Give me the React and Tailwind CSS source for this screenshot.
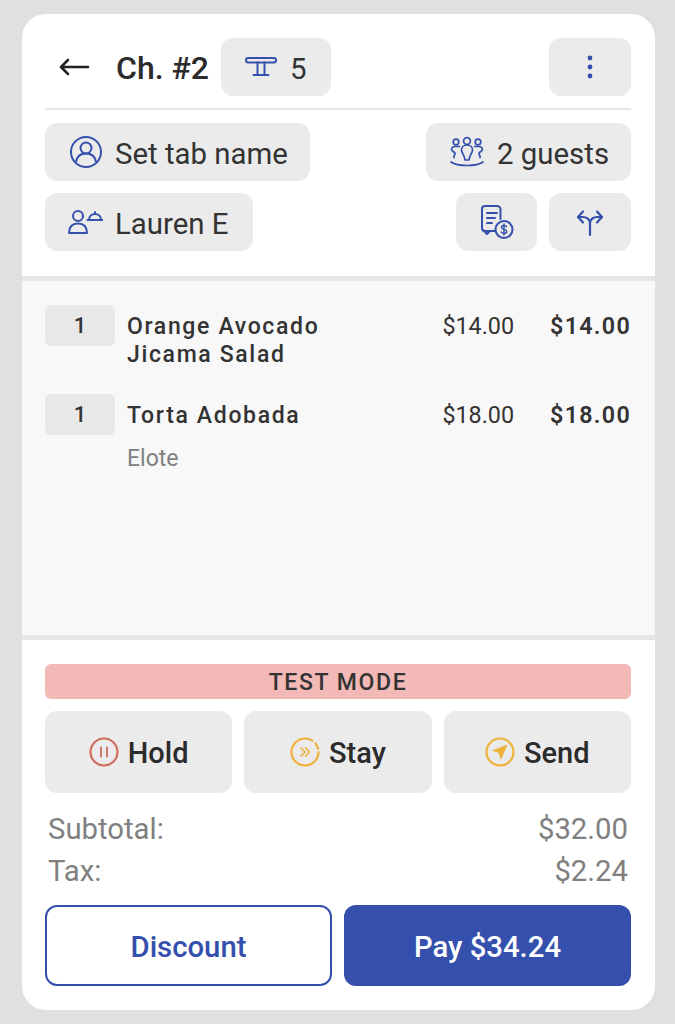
const BLUE = "#3450ac";

const BackArrow = () => (
  <svg width="32" height="22" viewBox="0 0 32 22" fill="none" stroke="#222222" strokeWidth="2.600" strokeLinecap="round" strokeLinejoin="round">
    <path d="M30 11H3M10 4l-7 7 7 7" />
  </svg>
);

const TableIcon = () => (
  <svg width="34" height="24" viewBox="0 0 34 24" fill="none" stroke={BLUE} strokeWidth="2" strokeLinecap="round">
    <rect x="2" y="3" width="30" height="4.500" rx="2.200" />
    <path d="M13.500 7.500V19M20.500 7.500V19M9.500 20h15" />
  </svg>
);

const PersonCircleIcon = () => (
  <svg width="34" height="34" viewBox="0 0 34 34" fill="none" stroke={BLUE} strokeWidth="2">
    <circle cx="17" cy="17" r="15" />
    <circle cx="17" cy="13" r="5.500" />
    <path d="M7 27c1-6 5-8.500 10-8.500S26 21 27 27" />
  </svg>
);

const ServerIcon = () => (
  <svg width="36" height="26" viewBox="0 0 36 26" fill="none" stroke={BLUE} strokeWidth="2" strokeLinecap="round" strokeLinejoin="round">
    <circle cx="11" cy="7" r="5" />
    <path d="M2 24c0-6 3-9.500 9-9.500s9 3.500 9 9.500zM22 11c0-3.500 2.500-6 6-6s6 2.500 6 6zM20.500 11h15M28 5V3" />
  </svg>
);

const GuestsIcon = () => (
  <svg width="34" height="32" viewBox="0 0 34 32" fill="none" stroke={BLUE} strokeWidth="1.700" strokeLinecap="round" strokeLinejoin="round">
    <circle cx="17" cy="5" r="3.400" />
    <circle cx="6" cy="6" r="2.800" />
    <circle cx="28" cy="6" r="2.800" />
    <path d="M11.500 14c0-3 2.500-5 5.500-5s5.500 2 5.500 5c0 3-3 5-3.500 10h-4c-.5-5-3.500-7-3.500-10z" />
    <path d="M9.500 10.500H5c-2 0-3.500 1.500-3.500 3s2.500 2.500 3.500 3.500-2 2.500-1 4.500M24.500 10.500H29c2 0 3.500 1.500 3.500 3s-2.500 2.500-3.500 3.500 2 2.500 1 4.500" />
    <path d="M1 26c4 3 9 3.500 16 3.500S29 29 33 26" />
  </svg>
);

const CheckDollarIcon = () => (
  <svg width="34" height="36" viewBox="0 0 34 36" fill="none" stroke={BLUE} strokeWidth="2" strokeLinecap="round" strokeLinejoin="round">
    <path d="M15 27H5c-1.500 0-3-1-3-3V5c0-2 1.500-3 3-3h12c2 0 3.500 1.500 3.500 3v10" />
    <path d="M7 9h10M7 14h8M7 19h5" />
    <path d="M3 26l4 4 3-3" />
    <circle cx="24" cy="25.500" r="8.500" />
    <path d="M26.500 22.700c-.5-.9-1.500-1.200-2.500-1.200-1.300 0-2.500.7-2.500 1.900 0 2.600 5.200 1.400 5.200 4 0 1.200-1.200 2-2.700 2-1.100 0-2.100-.4-2.700-1.300M24 20v11" strokeWidth="1.400" />
  </svg>
);

const SplitIcon = () => (
  <svg width="30" height="32" viewBox="0 0 30 32" fill="none" stroke={BLUE} strokeWidth="2.200" strokeLinecap="round" strokeLinejoin="round">
    <path d="M15 29V17c0-4-4-6-7-6H3M15 17c0-4 4-6 7-6h5" />
    <path d="M8 5.500L3 11l5 5.500M22 5.500l5 5.500-5 5.500" />
  </svg>
);

const PauseIcon = () => (
  <svg width="30" height="30" viewBox="0 0 30 30" fill="none" stroke="#cd6f60" strokeWidth="2.200">
    <circle cx="15" cy="15" r="13.500" />
    <path d="M12 10.500v9M18 10.500v9" strokeWidth="1.800" strokeLinecap="round" />
  </svg>
);

const StayIcon = () => (
  <svg width="30" height="30" viewBox="0 0 30 30" fill="none" stroke="#eeb13c" strokeWidth="2.200" strokeLinecap="round" strokeLinejoin="round">
    <circle cx="15" cy="15" r="13.500" strokeDasharray="71 4 6 3.800" />
    <path d="M11 11l4 4-4 4M15.500 11l4 4-4 4" strokeWidth="1.700" />
  </svg>
);

const SendIcon = () => (
  <svg width="30" height="30" viewBox="0 0 30 30" fill="none" stroke="#eeb13c" strokeWidth="2.200">
    <circle cx="15" cy="15" r="13.500" />
    <path d="M22.500 7.500L7 13.500l6.500 2.500 2.500 7z" fill="#eeb13c" stroke="none" />
  </svg>
);

const Chip = ({ className = "", icon, label }) => (
  <div className={`h-[58px] bg-[#ebebeb] rounded-xl flex items-center text-[#333333] text-[29.400px] ${className}`}>
    {icon}
    {label && <span className="pt-1">{label}</span>}
  </div>
);

const LineItem = ({ name, price, note, className = "" }) => (
  <div className={`flex items-start ${className}`}>
    <div className="w-[70px] h-[41px] shrink-0 bg-[#e8e8e8] rounded-md flex items-center justify-center text-[22px] text-[#333333] font-medium">
      1
    </div>
    <div className="ml-3 flex-1 pt-[8px]">
      <div className="text-[23px] leading-[28px] font-medium tracking-[1.650px] text-[#333333]">{name}</div>
      {note && <div className="mt-[15px] text-[23px] leading-[28px] text-[#808080]">{note}</div>}
    </div>
    <div className="w-[72px] text-right pt-[7px] text-[23.300px] leading-[28px] text-[#333333]">{price}</div>
    <div className="w-[117px] text-right pt-[7px] text-[23.300px] leading-[28px] font-semibold tracking-[1.300px] text-[#333333]">{price}</div>
  </div>
);

const ActionButton = ({ icon, label }) => (
  <div className="flex-1 h-[82px] bg-[#ebebeb] rounded-xl flex items-center justify-center gap-[9px] text-[29px] font-medium text-[#2b2b2b]">
    {icon}
    <span className="pt-1">{label}</span>
  </div>
);

const App = () => {
  return (
    <div className="w-[675px] h-[1024px] bg-[#e0e0e0] pt-[14px] pl-[22px] font-['Roboto',sans-serif]">
      <div className="w-[633px] h-[996px] bg-white rounded-[24px] overflow-hidden flex flex-col">
        {/* header */}
        <div className="h-[267px] shrink-0 pl-[23px] pr-[24px] pt-[24px] border-b-[5px] border-[#e6e6e6]">
          <div className="flex items-center h-[58px]">
            <div className="ml-[13px]">
              <BackArrow />
            </div>
            <div className="ml-[26px] pt-[2px] text-[32px] font-medium text-[#2b2b2b]">Ch. #2</div>
            <Chip className="ml-3 w-[110px] pl-[23px] gap-3" icon={<TableIcon />} label="5" />
            <Chip
              className="ml-auto w-[82px] justify-center"
              icon={
                <svg width="6" height="24" viewBox="0 0 6 24" fill={BLUE}>
                  <circle cx="3" cy="3" r="2.400" />
                  <circle cx="3" cy="12" r="2.400" />
                  <circle cx="3" cy="21" r="2.400" />
                </svg>
              }
            />
          </div>
          <div className="h-[2px] bg-[#e6e6e6] mt-3 mb-[13px]" />
          <div className="flex justify-between">
            <Chip className="w-[265px] pl-6 gap-3" icon={<PersonCircleIcon />} label="Set tab name" />
            <Chip className="w-[205px] pl-6 gap-[13px]" icon={<GuestsIcon />} label="2 guests" />
          </div>
          <div className="flex mt-3">
            <Chip className="w-[208px] pl-[22px] gap-3" icon={<ServerIcon />} label="Lauren E" />
            <Chip className="ml-auto w-[81px] justify-center" icon={<CheckDollarIcon />} />
            <Chip className="ml-3 w-[82px] justify-center" icon={<SplitIcon />} />
          </div>
        </div>

        {/* items */}
        <div className="h-[354px] shrink-0 bg-[#f8f8f8] pl-[23px] pr-[24px] pt-[24px]">
          <LineItem name={<>Orange Avocado<br />Jicama Salad</>} price="$14.00" />
          <LineItem name="Torta Adobada" price="$18.00" note="Elote" className="mt-[25px]" />
        </div>

        {/* footer */}
        <div className="flex-1 border-t-[5px] border-[#e6e6e6] pl-[23px] pr-[24px] pt-[24px]">
          <div className="h-[35px] pt-[3px] bg-[#f3b9b6] rounded-md flex items-center justify-center text-[23px] font-medium tracking-[1.600px] text-[#333333]">
            TEST MODE
          </div>
          <div className="flex gap-3 mt-3">
            <ActionButton icon={<PauseIcon />} label="Hold" />
            <ActionButton icon={<StayIcon />} label="Stay" />
            <ActionButton icon={<SendIcon />} label="Send" />
          </div>
          <div className="mt-[15px] px-[3px] text-[29.300px] text-[#808080]">
            <div className="flex justify-between h-[42px] leading-[42px]">
              <span>Subtotal:</span>
              <span>$32.00</span>
            </div>
            <div className="flex justify-between h-[42px] leading-[42px]">
              <span>Tax:</span>
              <span>$2.24</span>
            </div>
          </div>
          <div className="flex justify-between mt-[13px]">
            <div className="w-[287px] h-[81px] pt-1 border-[2.500px] border-[#3450ac] rounded-xl flex items-center justify-center text-[29.300px] font-medium text-[#3450ac]">
              Discount
            </div>
            <div className="w-[287px] h-[81px] pt-1 bg-[#3450ac] rounded-xl flex items-center justify-center text-[29.300px] font-medium text-white">
              Pay $34.24
            </div>
          </div>
        </div>
      </div>
    </div>
  );
};

export default App;
